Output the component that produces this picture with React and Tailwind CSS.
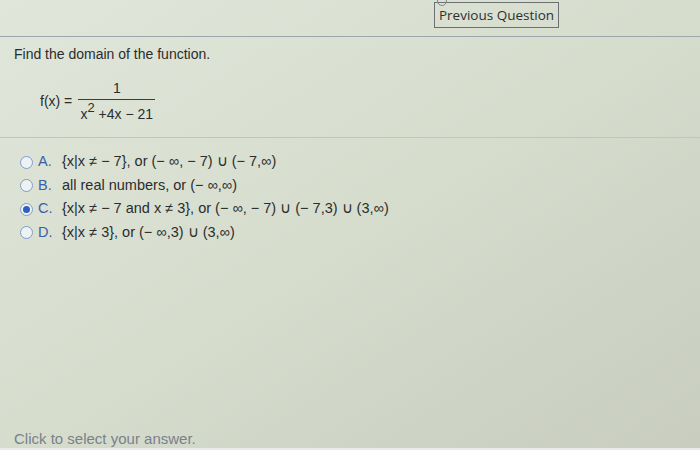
import React from 'react';

const options = [
    { key: 'A', text: <>{'{'}x|x ≠ − 7{'}'}, or (− ∞, − 7) ∪ (− 7,∞)</> },
    { key: 'B', text: <>all real numbers, or (− ∞,∞)</> },
    { key: 'C', text: <>{'{'}x|x ≠ − 7 and x ≠ 3{'}'}, or (− ∞, − 7) ∪ (− 7,3) ∪ (3,∞)</>, selected: true },
    { key: 'D', text: <>{'{'}x|x ≠ 3{'}'}, or (− ∞,3) ∪ (3,∞)</> },
];

function Radio({ selected }) {
    return (
        <span className="w-[13px] h-[13px] rounded-full border-[1.5px] border-[#7f9dc9] bg-[#eef2f4] flex items-center justify-center shrink-0">
            {selected && <span className="w-[7px] h-[7px] rounded-full bg-[#2f5fbf]" />}
        </span>
    );
}

export default function App() {
    return (
        <div
            className="w-[700px] h-[450px] overflow-hidden flex flex-col text-[#2a2d2e] bg-gradient-to-br from-[#e0e6da] via-[#d6ddcd] to-[#c8cdbf]"
            style={{ fontFamily: '"Liberation Sans", Arial, sans-serif' }}
        >
            {/* top bar */}
            <div className="h-[37px] flex justify-end pr-[141px] pt-[2px] border-b border-[#9ba6ad]">
                <button
                    className="relative w-[125px] h-[26px] border border-[#6b7072] text-[13.5px] text-[#2c2f31] flex items-center justify-center"
                    style={{ fontFamily: '"Open Sans", sans-serif' }}
                >
                    <span className="absolute -top-[7px] left-[2px] w-[10px] h-[10px] rounded-full border border-[#888]" />
                    Previous Question
                </button>
            </div>

            {/* question */}
            <div className="pl-[14px] pt-[9px] pb-[14px] border-b border-[#bfc6c1]">
                <p className="text-[14px] leading-[16px]">Find the domain of the function.</p>
                <div className="mt-[18px] ml-[26px] flex items-center text-[14px]">
                    <span className="mr-[6px]">f(x) =</span>
                    <div className="flex flex-col items-center w-[77px]">
                        <span className="leading-[16px] pb-[3px]">1</span>
                        <span className="w-full border-t border-[#3a3d3e]" />
                        <span className="leading-[16px] pt-[6px]">
                            x<span className="text-[13px] relative -top-[7px]">2</span> +4x − 21
                        </span>
                    </div>
                </div>
            </div>

            {/* options */}
            <div className="pl-[20px] pt-[16px] flex flex-col gap-[7px] text-[14.5px]">
                {options.map(o => (
                    <div key={o.key} className="flex items-center h-[16.5px]">
                        <Radio selected={o.selected} />
                        <span className="ml-[5px] w-[24px] text-[#3c5ea6]">{o.key}.</span>
                        <span>{o.text}</span>
                    </div>
                ))}
            </div>

            <div className="flex-1" />
            <div className="pl-[14px] pb-[1px] text-[15px] text-[#7b808c] leading-[17px]">Click to select your answer.</div>
            <div className="h-[2px] bg-[#e8ece6]" />
        </div>
    );
}
